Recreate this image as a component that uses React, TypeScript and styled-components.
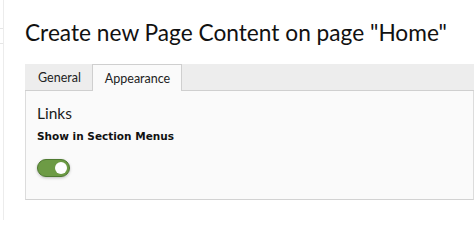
import React from "react"
import styled, { createGlobalStyle } from "styled-components"

const GlobalStyle = createGlobalStyle`
  html, body {
    margin: 0;
    padding: 0;
    background: #ffffff;
  }
  body {
    font-family: Lato, "Open Sans", sans-serif;
    color: #111;
  }
`

const Page = styled.div`
  display: flex;
  min-height: 220px;
`

const SideEdge = styled.div`
  width: 3px;
  border-right: 1px solid #ececec;
  padding-top: 28px;
`

const SideItem = styled.div`
  height: 14px;
  border-top: 1px solid #e6e6e6;
  border-bottom: 1px solid #e6e6e6;
`

const Main = styled.main`
  flex: 1;
  min-width: 0;
  padding: 18px 0 0 21px;
`

const Title = styled.h1`
  margin: 0 0 17px;
  font-size: 22.7px;
  line-height: 29px;
  font-weight: 400;
  color: #111;
  white-space: nowrap;
`

const TabBar = styled.div`
  display: flex;
  height: 26px;
  background: #ededed;
  border-bottom: 1px solid #cfcfcf;
`

const Tab = styled.div<{ $active?: boolean }>`
  display: flex;
  align-items: center;
  padding: 0 11px 0 12px;
  font-size: 12.5px;
  color: #222;
  height: ${(p) => (p.$active ? "27px" : "26px")};
  box-sizing: border-box;
  background: ${(p) => (p.$active ? "#fafafa" : "transparent")};
  border: 1px solid ${(p) => (p.$active ? "#cfcfcf" : "transparent")};
  border-bottom: none;
  margin-left: ${(p) => (p.$active ? "-1px" : "0")};
`

const Panel = styled.section`
  background: #fafafa;
  border: 1px solid #dcdcdc;
  border-top: none;
  border-bottom-color: #d2d2d2;
  padding: 12px 11px 22px;
  height: 109px;
  box-sizing: border-box;
`

const SectionTitle = styled.h2`
  margin: 0 0 6px;
  font-size: 15.5px;
  line-height: 20px;
  font-weight: 400;
  color: #1a1a1a;
`

const FieldLabel = styled.label`
  display: block;
  font-family: "DejaVu Sans", Verdana, sans-serif;
  font-weight: 700;
  font-size: 10.5px;
  line-height: 14px;
  color: #111;
  margin-bottom: 16px;
`

const Toggle = styled.button<{ $on: boolean }>`
  position: relative;
  display: block;
  width: 33px;
  height: 18px;
  padding: 0;
  border-radius: 9px;
  border: 1px solid ${(p) => (p.$on ? "#4f7a31" : "#bbb")};
  background: ${(p) => (p.$on ? "#6d9b45" : "#e5e5e5")};
  box-shadow: 0 1px 3px rgba(0, 0, 0, 0.25);
  cursor: pointer;
`

const Knob = styled.span<{ $on: boolean }>`
  position: absolute;
  top: 2px;
  left: ${(p) => (p.$on ? "17px" : "2px")};
  width: 12px;
  height: 12px;
  border-radius: 50%;
  background: #fff;
`

export default function App() {
  const [on, setOn] = React.useState(true)
  return (
    <>
      <GlobalStyle />
      <Page>
        <SideEdge>
          <SideItem />
        </SideEdge>
        <Main>
          <Title>Create new Page Content on page "Home"</Title>
          <TabBar>
            <Tab>General</Tab>
            <Tab $active>Appearance</Tab>
          </TabBar>
          <Panel>
            <SectionTitle>Links</SectionTitle>
            <FieldLabel>Show in Section Menus</FieldLabel>
            <Toggle $on={on} onClick={() => setOn(!on)} aria-pressed={on}>
              <Knob $on={on} />
            </Toggle>
          </Panel>
        </Main>
      </Page>
    </>
  )
}
